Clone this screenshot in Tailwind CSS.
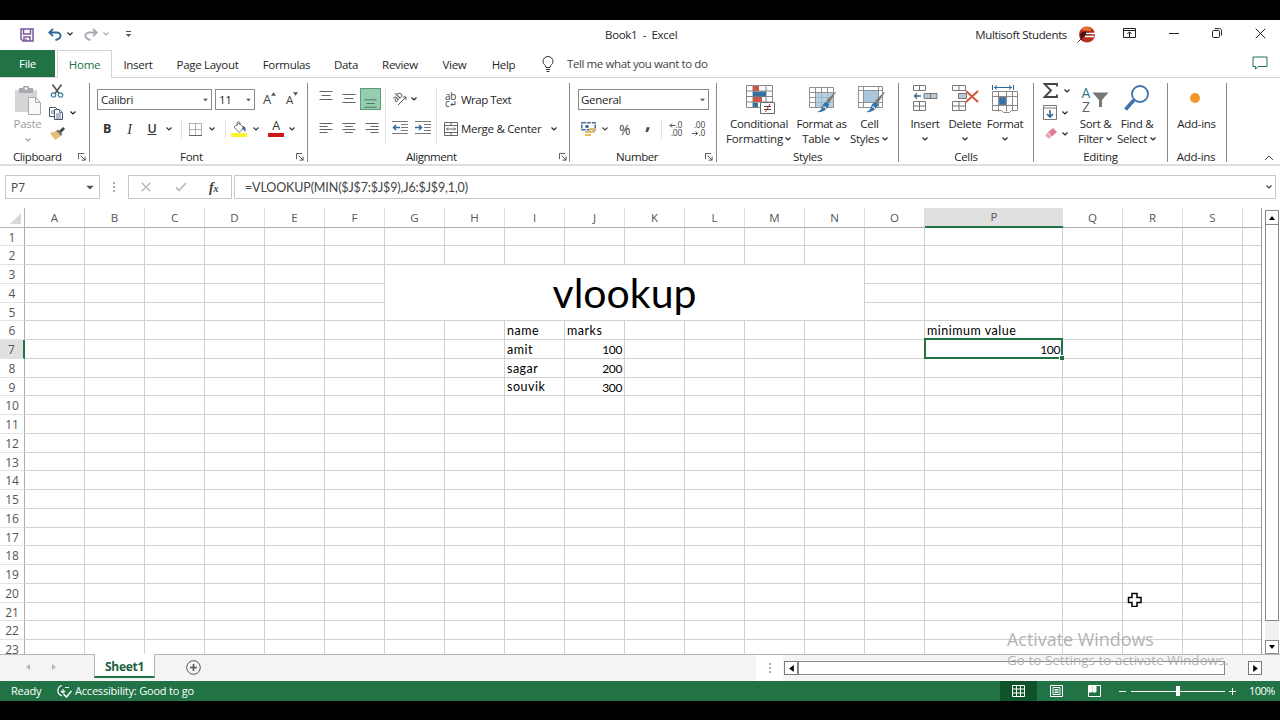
<!DOCTYPE html>
<html lang="en">

<head>
    <meta charset="UTF-8">
    <meta name="viewport" content="width=device-width, initial-scale=1.0">
    <script src="https://cdn.jsdelivr.net/npm/@tailwindcss/browser@4"></script>
    <title>Book1 - Excel</title>
</head>

<body class="bg-black w-[1280px] h-[720px] overflow-hidden pt-5 font-['Open_Sans',sans-serif] text-[11.5px] tracking-[-0.3px] text-[#262626]">

    <!-- shared glyphs -->
    <svg class="hidden">
        <symbol id="caret" viewBox="0 0 8 6"><path d="M1.5 1.5 4 4 6.500 1.500" fill="none" stroke="currentColor" stroke-width="1.200" /></symbol>
        <symbol id="launch" viewBox="0 0 9 9"><path d="M.5 7V.5H7M3 3l5 5M8 4v4H4" fill="none" stroke="#444" /></symbol>
        <symbol id="drop" viewBox="0 0 6 4"><path d="M0 .5h6L3 3.500z" fill="#555" /></symbol>
    </svg>

    <div class="relative bg-white h-[681px] flex flex-col">

        <!-- title bar -->
        <div class="h-[30px] flex items-center shrink-0">
            <div class="flex items-center pl-[20px] w-[605px]">
                <svg class="w-[14px] h-[14px]" viewBox="0 0 14 14" fill="none" stroke="#7a559e" stroke-width="1.500"><path d="M1 1h12v12H3l-2-2zM3.500 1v5h7V1M4 13V9h6v4M6 11v2" /></svg>
                <svg class="w-[14px] h-[13px] ml-[14px] -mt-px" viewBox="0 0 14 13" fill="none" stroke="#2f6798" stroke-width="1.800"><path d="M5 .8 1.200 4.500 5 8.200M1.500 4.500H9c5 .5 5 6-1.500 7.500" /></svg>
                <svg class="w-2 h-1.5 ml-[4px] -mt-[2px]"><use href="#caret" /></svg>
                <svg class="w-[14px] h-[13px] ml-[10px] -mt-px" viewBox="0 0 14 13" fill="none" stroke="#a4a8ae" stroke-width="1.800"><path d="M9 .8 12.800 4.500 9 8.200M12.500 4.500H5c-5 .5-5 6 1.500 7.500" /></svg>
                <svg class="w-2 h-1.5 ml-[4px] -mt-[2px] text-[#aaa]"><use href="#caret" /></svg>
                <svg class="w-[7px] h-[7px] ml-[15px] -mt-[2px]" viewBox="0 0 7 7"><path d="M1 .5h5" stroke="#555" /><path d="M.8 3h5.400L3.500 6z" fill="#555" /></svg>
            </div>
            <span class="whitespace-pre text-[11.500px]">Book1  -  Excel</span>
            <div class="ml-auto flex items-center">
                <span class="text-[11.500px] tracking-[-0.36px]">Multisoft Students</span>
                <svg class="w-[18px] h-[18px] ml-[10px]" viewBox="0 0 18 18"><circle cx="10" cy="8.500" r="8" fill="#b8301f" /><path d="M4 4c3-4 9-4 11 0l-4 1z" fill="#e8742a" /><path d="M3 8c4-4 9-3 12 1H8l-4 5z" fill="#4a1210" /><path d="M9 7.500h9M8 10.500h9" stroke="#fff" stroke-width="1.300" /><path d="m.5 16.500 4-4" stroke="#333" /></svg>
                <svg class="w-[14px] h-[12px] ml-[28px] mb-1" viewBox="0 0 14 12" fill="none" stroke="#222"><path d="M.5 1.500h12v9H.5zM.5 3.500h12M6.500 10V5M4.300 7l2.200-2.200L8.700 7" /></svg>
                <svg class="w-[10px] h-[10px] ml-[32px] mb-1" viewBox="0 0 10 10" stroke="#222"><path d="M0 5.500h10" /></svg>
                <svg class="w-[10px] h-[10px] ml-[33px] mb-1" viewBox="0 0 10 10" fill="none" stroke="#222"><rect x=".5" y="2.500" width="7" height="7" rx="1.200" /><path d="M2.500.6H7.500c1.200 0 2 .8 2 2v5" /></svg>
                <svg class="w-[11px] h-[11px] ml-[33px] mb-1 mr-[14px]" viewBox="0 0 11 11" stroke="#222"><path d="m.7.7 9.600 9.600m0-9.600L.7 10.300" /></svg>
            </div>
        </div>

        <!-- ribbon tabs -->
        <div class="h-[28px] flex shrink-0 border-b border-[#d4d4d4] text-[11.500px]">
            <div class="w-[55px] h-[27px] bg-[#217346] text-white flex items-center justify-center">File</div>
            <div class="w-[55px] ml-[2px] h-[28px] bg-white border border-b-0 border-[#d4d4d4] text-[#217346] flex items-center justify-center">Home</div>
            <div class="w-[52px] pt-[2px] flex items-center justify-center">Insert</div>
            <div class="w-[87px] pt-[2px] flex items-center justify-center">Page Layout</div>
            <div class="w-[71px] pt-[2px] flex items-center justify-center">Formulas</div>
            <div class="w-[48px] pt-[2px] flex items-center justify-center">Data</div>
            <div class="w-[60px] pt-[2px] flex items-center justify-center">Review</div>
            <div class="w-[49px] pt-[2px] flex items-center justify-center">View</div>
            <div class="w-[49px] pt-[2px] flex items-center justify-center">Help</div>
            <div class="flex items-center ml-[14px]">
                <svg class="w-[12px] h-[16px]" viewBox="0 0 12 16" fill="none" stroke="#333"><path d="M4 11.500C4 9 1 8.500 1 5.500a5 5 0 0 1 10 0c0 3-3 3.500-3 6zM4 13.500h4M4.500 15.500h3" /></svg>
                <span class="ml-[13px] text-[#444] tracking-[-0.4px]">Tell me what you want to do</span>
            </div>
            <svg class="w-[16px] h-[14px] ml-auto mr-[12px] mt-[6px]" viewBox="0 0 16 14" fill="none" stroke="#217346"><path d="M1 1h14v9.500H6.500L3.500 13v-2.500H1z" /></svg>
        </div>

        <!-- ribbon -->
        <div class="h-[88px] flex shrink-0 border-b-2 border-[#dedede] pt-[5px]">

            <!-- clipboard -->
            <div class="w-[90px] h-[79px] border-r border-[#8a8a8a] flex flex-col">
                <div class="flex h-[67px] shrink-0">
                    <div class="w-[55px] flex flex-col items-center text-[#a0a0a0] pt-[3px]">
                        <svg class="w-[28px] h-[29px]" viewBox="0 0 28 29"><path d="M1 4h22v22H1z" fill="#d5d5d8" /><path d="M5 2h4a3 3 0 0 1 6 0h4v5H5z" fill="#a9a9ad" /><circle cx="12" cy="2.500" r="1.300" fill="#fff" /><path d="M14.500 11.500h7l5 5v12h-12z" fill="#fafafa" stroke="#aaa" /><path d="M21.500 11.500v5h5" fill="none" stroke="#aaa" /></svg>
                        <span class="leading-[18px]">Paste</span>
                        <svg class="w-2 h-1.5 mt-1"><use href="#caret" /></svg>
                    </div>
                    <div class="flex flex-col pt-[1px]">
                        <svg class="w-[14px] h-[14px] ml-[-5px]" viewBox="0 0 14 14" fill="none"><path d="m2.500.5 6.500 9M11.500.5 5 9.500" stroke="#555" stroke-width="1.600" /><circle cx="3.500" cy="11" r="2.200" stroke="#3a7ca5" stroke-width="1.200" /><circle cx="10.500" cy="11" r="2.200" stroke="#3a7ca5" stroke-width="1.200" /></svg>
                        <div class="flex items-center mt-[8px] ml-[-6px]">
                            <svg class="w-[14px] h-[14px]" viewBox="0 0 14 14" fill="#fff" stroke="#3f5a70"><path d="M.5 1.500h6l2 2v7h-8z" /><path d="M5.500 3.500h5l3 3v7h-8z" /><path d="M7 8h5M7 10h5M7 12h5M2 5h3M2 7h3M10.500 4v2.500H13" stroke-width=".8" /></svg>
                            <svg class="w-2 h-1.5 ml-[6px]"><use href="#caret" /></svg>
                        </div>
                        <svg class="w-[15px] h-[13px] ml-[-5px] mt-[7px]" viewBox="0 0 15 13"><path d="m0 6 6-2 5 5-6 4z" fill="#e4bf74" /><path d="m6 4 2-1.500L12.500 7 11 9z" fill="#777" /><path d="m9 4 4-4 2 2-4 4z" fill="#444" /></svg>
                    </div>
                </div>
                <div class="flex items-center h-[14px] shrink-0 pl-[13px]"><span class="w-[48px] text-[11.500px] tracking-[-0.4px]">Clipboard</span><svg class="w-[8px] h-[8px] ml-[17px]"><use href="#launch" /></svg></div>
            </div>

            <!-- font -->
            <div class="w-[218px] h-[79px] border-r border-[#8a8a8a] flex flex-col">
                <div class="flex items-center shrink-0 pl-[7px] pt-[6px]">
                    <div class="w-[115px] h-[21px] border border-[#8a8a8a] flex items-center justify-between pl-[3px] pr-[3px] text-[11.500px]">Calibri<svg class="w-[5px] h-[4px]"><use href="#drop" /></svg></div>
                    <div class="w-[40px] h-[21px] ml-[3px] border border-[#8a8a8a] flex items-center justify-between pl-[3px] pr-[3px]">11<svg class="w-[5px] h-[4px]"><use href="#drop" /></svg></div>
                    <div class="flex w-[13px] ml-[8px] text-[13px] text-[#444]">A<svg class="w-[5px] h-[4px] mt-[2px] shrink-0" viewBox="0 0 6 4"><path d="M0 4h6L3 0z" fill="#456" /></svg></div>
                    <div class="flex w-[13px] ml-[10px] text-[11.500px] text-[#444]">A<svg class="w-[5px] h-[4px] mt-[1px] shrink-0" viewBox="0 0 6 4"><path d="M0 0h6L3 4z" fill="#456" /></svg></div>
                </div>
                <div class="flex items-center h-[22px] shrink-0 mt-[8px] pl-[7px] text-[12.500px] text-[#333]">
                    <span class="w-[20px] text-center font-bold">B</span>
                    <span class="w-[25px] text-center italic font-['Liberation_Serif',serif] text-[14px]">I</span>
                    <span class="w-[20px] text-center font-semibold underline">U</span>
                    <svg class="w-2 h-1.5 ml-[3px]"><use href="#caret" /></svg>
                    <span class="w-px h-[19px] bg-[#e3e3e3] ml-[8px]"></span>
                    <svg class="w-[13px] h-[13px] ml-[7px]" viewBox="0 0 13 13" fill="none" stroke="#666"><path d="M.5.5h12v12M.5.5v12M6.500.5v12M.5 6.500h12" stroke-dasharray="1 1" /><path d="M0 12.500h13" /></svg>
                    <svg class="w-2 h-1.5 ml-[6px]"><use href="#caret" /></svg>
                    <span class="w-px h-[19px] bg-[#e3e3e3] ml-[9px]"></span>
                    <svg class="w-[16px] h-[16px] ml-[5px]" viewBox="0 0 16 16"><path d="M0 12h16v4H0z" fill="#f8f32b" /><path d="m3 6 5-4 5 5-5 4.500z" fill="#fff" stroke="#777" /><path d="M6 5V1.500q2-2 3 0V4" fill="none" stroke="#777" /><path d="M12 5q4 1 2 6-1-3-3-3z" fill="#3a6a90" /></svg>
                    <svg class="w-2 h-1.5 ml-[5px]"><use href="#caret" /></svg>
                    <span class="w-[16px] h-[16px] ml-[8px] flex items-center justify-center border-b-4 border-[#d01818] leading-none pb-px">A</span>
                    <svg class="w-2 h-1.5 ml-[4px]"><use href="#caret" /></svg>
                </div>
                <div class="flex items-center h-[14px] shrink-0 mt-[10px] pl-[90px] text-[11.500px]"><span class="w-[24px]">Font</span><svg class="w-[8px] h-[8px] ml-[92px]"><use href="#launch" /></svg></div>
            </div>

            <!-- alignment -->
            <div class="w-[262px] h-[79px] border-r border-[#8a8a8a] flex flex-col">
                <div class="flex h-[67px] shrink-0">
                    <div class="w-[77px] pl-[11px] pt-[5px]">
                        <div class="flex items-start">
                            <svg class="w-[14px] h-[10px] mt-[3px]" viewBox="0 0 14 10" stroke="#666"><path d="M.5.5h13M2.500 4.500h9M.5 8.500h13" /></svg>
                            <svg class="w-[14px] h-[10px] mt-[6px] ml-[9px]" viewBox="0 0 14 10" stroke="#666"><path d="M.5.5h13M2.500 4.500h9M.5 8.500h13" /></svg>
                            <div class="w-[21px] h-[22px] ml-[4px] bg-[#97cdaf] border border-[#5d9c79] flex justify-center items-end"><svg class="w-[13px] h-[10px]" viewBox="0 0 14 10" stroke="#4d6f5b"><path d="M.5.5h13M2.500 4.500h9M.5 8.500h13" /></svg></div>
                        </div>
                        <div class="flex mt-[13px] gap-[9px]">
                            <svg class="w-[14px] h-[11px]" viewBox="0 0 14 11" stroke="#666"><path d="M.5.5h13M.5 3.500h8M.5 6.500h13M.5 9.500h8" /></svg>
                            <svg class="w-[14px] h-[11px]" viewBox="0 0 14 11" stroke="#666"><path d="M.5.5h13M3 3.500h8M.5 6.500h13M3 9.500h8" /></svg>
                            <svg class="w-[14px] h-[11px]" viewBox="0 0 14 11" stroke="#666"><path d="M.5.5h13M5.500 3.500h8M.5 6.500h13M5.500 9.500h8" /></svg>
                        </div>
                    </div>
                    <div class="w-[52px] my-[5px] border-x border-[#e3e3e3] pl-[6px]">
                        <div class="flex items-center h-[21px]">
                            <div class="relative w-[16px] h-[16px] text-[9.500px] leading-none text-[#444]"><span class="absolute left-0 top-[1px] -rotate-45">ab</span><svg class="w-[16px] h-[16px]" viewBox="0 0 16 16" fill="none" stroke="#555"><path d="M6 14 14 6M11 6h3v3" /></svg></div>
                            <svg class="w-2 h-1.5 ml-[2px]"><use href="#caret" /></svg>
                        </div>
                        <div class="flex mt-[12px] gap-[7px]">
                            <svg class="w-[16px] h-[13px]" viewBox="0 0 16 13" fill="none" stroke="#777"><path d="M0 .5h16M9 3.500h7M9 6.500h7M9 9.500h7M0 12.500h16" /><path d="M8 6.500H1.500M4 4 1.500 6.500 4 9" stroke="#2f6798" stroke-width="1.500" /></svg>
                            <svg class="w-[16px] h-[13px]" viewBox="0 0 16 13" fill="none" stroke="#777"><path d="M0 .5h16M9 3.500h7M9 6.500h7M9 9.500h7M0 12.500h16" /><path d="M0 6.500h6.500M4 4l2.500 2.500L4 9" stroke="#2f6798" stroke-width="1.500" /></svg>
                        </div>
                    </div>
                    <div class="pl-[7px] pt-[6px]">
                        <div class="flex items-center h-[21px]">
                            <div class="w-[14px] ml-[1px] text-[10px] leading-[7px] text-[#444] flex flex-col"><span>ab</span><span class="flex">c<svg class="w-[6px] h-[6px] mt-px" viewBox="0 0 6 6" fill="none" stroke="#456"><path d="M5 0v3.500H1M2.500 2 1 3.500 2.500 5" /></svg></span></div>
                            <span class="ml-[2px] text-[11.500px] tracking-[-0.5px]">Wrap Text</span>
                        </div>
                        <div class="flex items-center h-[21px] mt-[8px]">
                            <svg class="w-[14px] h-[14px]" viewBox="0 0 14 14" fill="none" stroke="#666"><path d="M.5.5h13v13H.5zM.5 3.500h13M.5 10.500h13M7 .5v3M7 10.500v3M2.500 7h9M4 5.500 2.500 7 4 8.500M10 5.500 11.500 7 10 8.500" /></svg>
                            <span class="ml-[3px] w-[82px] whitespace-nowrap text-[11.500px]">Merge &amp; Center</span>
                            <svg class="w-2 h-1.5 ml-[7px]"><use href="#caret" /></svg>
                        </div>
                    </div>
                </div>
                <div class="flex items-center h-[14px] shrink-0 pl-[98px] text-[11.500px] tracking-[-0.45px]"><span class="w-[52px]">Alignment</span><svg class="w-[8px] h-[8px] ml-[101px]"><use href="#launch" /></svg></div>
            </div>

            <!-- number -->
            <div class="w-[147px] h-[79px] border-r border-[#8a8a8a] flex flex-col">
                <div class="w-[131px] h-[21px] shrink-0 ml-[8px] mt-[6px] border border-[#8a8a8a] flex items-center justify-between pl-[2px] pr-[3px]">General<svg class="w-[5px] h-[4px]"><use href="#drop" /></svg></div>
                <div class="flex items-center h-[22px] shrink-0 mt-[8px] pl-[11px] text-[#444]">
                    <svg class="w-[15px] h-[15px]" viewBox="0 0 15 15" fill="none"><path d="M.8.8h13.400v7H.8z" stroke="#46699a" stroke-width="1.500" stroke-dasharray="4 1" /><circle cx="6" cy="4.500" r="1.800" fill="#46699a" /><path d="M8 6h6v2H8zM8 9h6v2H8zM4 12h6v2H4zM4 9h4v2H4z" fill="#e9bd62" /></svg>
                    <svg class="w-2 h-1.5 ml-[5px]"><use href="#caret" /></svg>
                    <span class="ml-[10px] w-[13px] text-[14px]">%</span>
                    <span class="ml-[13px] w-[6px] text-[20px] leading-none font-bold -mt-[14px]">,</span>
                    <span class="w-px h-[19px] bg-[#e3e3e3] ml-[10px]"></span>
                    <div class="ml-[5px] w-[15px] text-[8.500px] leading-[8px] flex flex-col items-end whitespace-nowrap"><div class="flex items-center"><svg class="w-[7px] h-[5px]" viewBox="0 0 7 5" fill="none" stroke="#555"><path d="M6.500 2.500H.8M3 .5 1 2.500l2 2" /></svg>.0</div><div>.00</div></div>
                    <div class="ml-[8px] w-[15px] text-[8.500px] leading-[8px] flex flex-col items-end whitespace-nowrap"><div>.00</div><div class="flex items-center"><svg class="w-[7px] h-[5px]" viewBox="0 0 7 5" fill="none" stroke="#555"><path d="M0 2.500h5.700M3.500.5l2 2-2 2" /></svg>.0</div></div>
                </div>
                <div class="flex items-center h-[14px] shrink-0 mt-[10px] pl-[46px] text-[11.500px] tracking-[-0.4px]"><span class="w-[40px]">Number</span><svg class="w-[8px] h-[8px] ml-[49px]"><use href="#launch" /></svg></div>
            </div>

            <!-- styles -->
            <div class="w-[182px] h-[79px] border-r border-[#8a8a8a] flex flex-col">
                <div class="flex h-[67px] shrink-0 text-center leading-[15px] pt-[2px]">
                    <div class="w-[84px] flex flex-col items-center">
                        <svg class="w-[30px] h-[29px] ml-[4px]" viewBox="0 0 30 29"><path d="M.5.5h26v22H.5zM.5 6h26M.5 11.500h26M.5 17h26M7 .5v22M20 .5v22" fill="#fff" stroke="#888" /><path d="M7 1h6v5H7z" fill="#cf5545" /><path d="M7 6.500h13v5H7z" fill="#34719f" /><path d="M7 12h9v5H7z" fill="#cf5545" /><path d="M7 17.500h5V22H7z" fill="#34719f" /><path d="M14.500 17.500h14v11h-14z" fill="#fff" stroke="#666" /><path d="M18 21.500h7M18 24.500h7" stroke="#444" /><path d="m24 19-4.500 8" stroke="#c33" /></svg>
                        <div class="mt-[2px]">Conditional</div>
                        <div class="flex items-center whitespace-nowrap tracking-[-0.2px]">Formatting<svg class="w-2 h-1.5 ml-[1px]"><use href="#caret" /></svg></div>
                    </div>
                    <div class="w-[41px] flex flex-col items-center whitespace-nowrap">
                        <svg class="w-[28px] h-[29px] ml-[3px]" viewBox="0 0 28 29"><path d="M.5 2.500h24v20H.5zM.5 7.500h24M.5 12.500h24M.5 17.500h24M6.500 2.500v20M12.500 2.500v20M18.500 2.500v20" fill="#fff" stroke="#909090" /><path d="M7 8h17v14H7z" fill="#9fc0d8" opacity=".75" /><path d="m27 7-7 11-3-2 9-9z" fill="#777" /><path d="M17 17q5 1 2 5-4 6-11 5 4-1 5-5 1-4 4-5z" fill="#3974a8" /><path d="M14 22q3-1 3 2" stroke="#fff" fill="none" /></svg>
                        <div class="mt-[2px] tracking-[-0.4px]">Format as</div>
                        <div class="flex items-center">Table<svg class="w-2 h-1.5 ml-[3px]"><use href="#caret" /></svg></div>
                    </div>
                    <div class="w-[55px] flex flex-col items-center">
                        <svg class="w-[28px] h-[29px] ml-[4px]" viewBox="0 0 28 29"><path d="M.5 1.500h24v21H.5zM.5 5.500h24M.5 17.500h24M5.500 1.500v21M20.500 1.500v21" fill="#fff" stroke="#909090" /><path d="M6 6h14v11H6z" fill="#abc6da" /><path d="m27 7-7 11-3-2 9-9z" fill="#777" /><path d="M17 17q5 1 2 5-4 6-11 5 4-1 5-5 1-4 4-5z" fill="#3974a8" /><path d="M14 22q3-1 3 2" stroke="#fff" fill="none" /></svg>
                        <div class="mt-[2px]">Cell</div>
                        <div class="flex items-center">Styles<svg class="w-2 h-1.5 ml-[2px]"><use href="#caret" /></svg></div>
                    </div>
                </div>
                <div class="h-[14px] shrink-0 text-[11.500px] leading-[14px] text-center">Styles</div>
            </div>

            <!-- cells -->
            <div class="w-[135px] h-[79px] border-r border-[#8a8a8a] flex flex-col">
                <div class="flex h-[67px] shrink-0 pt-[2px] pl-[6px] leading-[15px]">
                    <div class="w-[40px] flex flex-col items-center">
                        <svg class="w-[26px] h-[29px]" viewBox="0 0 26 29" fill="none" stroke="#777"><path d="M1.500.5h12v5h-12zM7.500.5v5M1.500 16.500h12v9h-12zM7.500 16.500v9M1.500 21h12" /><path d="M12 8.500h13v5H12zM18.500 8.500v5" fill="#b9c8d4" /><path d="M9 11H2.500M5 8.500 2.500 11 5 13.500" stroke="#2f6798" stroke-width="1.300" /></svg>
                        <div class="mt-[2px]">Insert</div>
                        <svg class="w-2 h-1.5 mt-[5px]"><use href="#caret" /></svg>
                    </div>
                    <div class="w-[40px] flex flex-col items-center">
                        <svg class="w-[28px] h-[29px]" viewBox="0 0 28 29" fill="none" stroke="#777"><path d="M1.500.5h13v5h-13zM8 .5v5M1.500 16.500h13v9h-13zM8 16.500v9M1.500 21h13" /><path d="M7.500 8.500h8v5h-8z" fill="#b9c8d4" /><path d="m15 6 12 11M27 6 15 17" stroke="#d0583b" stroke-width="2" /></svg>
                        <div class="mt-[2px]">Delete</div>
                        <svg class="w-2 h-1.5 mt-[5px]"><use href="#caret" /></svg>
                    </div>
                    <div class="w-[40px] flex flex-col items-center">
                        <svg class="w-[28px] h-[29px]" viewBox="0 0 28 29" fill="none" stroke="#888"><path d="M1.500 6.500h25v19h-6l-2 2h-6l-2-2h-9zM1.500 11.500h25M1.500 20.500h25M7.500 6.500v20M15.500 6.500v20M21.500 6.500v19" /><path d="M8 12h7v8H8z" fill="#2f74b0" /><path d="M1.500 0v5M22.500 0v5M3 2.500h18M6 .5 3.500 2.500 6 4.500M18 .5l2.500 2L18 4.500" stroke="#2f6798" /></svg>
                        <div class="mt-[2px] tracking-[-0.4px]">Format</div>
                        <svg class="w-2 h-1.5 mt-[5px]"><use href="#caret" /></svg>
                    </div>
                </div>
                <div class="h-[14px] shrink-0 text-[11.500px] leading-[14px] text-center">Cells</div>
            </div>

            <!-- editing -->
            <div class="w-[134px] h-[79px] border-r border-[#8a8a8a] flex flex-col">
                <div class="flex h-[67px] shrink-0 leading-[15px]">
                    <div class="w-[41px] pl-[9px] flex flex-col">
                        <div class="flex items-center"><svg class="w-[15px] h-[15px]" viewBox="0 0 15 15" fill="none" stroke="#444" stroke-width="1.800"><path d="M14 3.500V1H1.500L8 7.500 1.500 14H14v-2.500" /></svg><svg class="w-2 h-1.5 ml-[5px]"><use href="#caret" /></svg></div>
                        <div class="flex items-center mt-[7px]"><svg class="w-[14px] h-[15px]" viewBox="0 0 14 15" fill="none" stroke="#777"><path d="M.5.5h13v14H.5zM.5 3h13" /><path d="M7 5v7M4 9l3 3 3-3" stroke="#2f6798" stroke-width="1.600" /></svg><svg class="w-2 h-1.5 ml-[4px]"><use href="#caret" /></svg></div>
                        <div class="flex items-center mt-[8px] ml-px"><svg class="w-[13px] h-[12px]" viewBox="0 0 13 12"><path d="m4 4 5-4 4 4-5 4.500z" fill="#e07f97" /><path d="m3.500 4.500 4 4L5 11 1 7.500z" fill="#eba9b8" /></svg><svg class="w-2 h-1.5 ml-[4px]"><use href="#caret" /></svg></div>
                    </div>
                    <div class="w-[41px] flex flex-col items-center pt-[2px]">
                        <div class="h-[29px] w-[28px] flex items-center">
                            <div class="leading-[14px] text-[14px] flex flex-col items-center"><span class="text-[#2b7a86]">A</span><span class="text-[#666]">Z</span></div>
                            <svg class="w-[17px] h-[16px] ml-[2px]" viewBox="0 0 17 16"><path d="M.5.5h16L10 8v7H7V8z" fill="#777" /></svg>
                        </div>
                        <div class="mt-[2px] whitespace-nowrap">Sort &amp;</div>
                        <div class="flex items-center">Filter<svg class="w-2 h-1.5 ml-[2px]"><use href="#caret" /></svg></div>
                    </div>
                    <div class="w-[42px] flex flex-col items-center pt-[2px]">
                        <svg class="w-[28px] h-[29px]" viewBox="0 0 28 29" fill="none" stroke="#3f75ad"><circle cx="17" cy="9" r="8" stroke-width="1.800" /><path d="m11 15-8.500 9.500" stroke-width="3.500" /></svg>
                        <div class="mt-[2px] whitespace-nowrap">Find &amp;</div>
                        <div class="flex items-center">Select<svg class="w-2 h-1.5 ml-[2px]"><use href="#caret" /></svg></div>
                    </div>
                </div>
                <div class="h-[14px] shrink-0 text-[11.500px] leading-[14px] text-center">Editing</div>
            </div>

            <!-- add-ins -->
            <div class="w-[59px] h-[79px] border-r border-[#8a8a8a] flex flex-col items-center">
                <div class="h-[67px] shrink-0 flex flex-col items-center leading-[15px]">
                    <div class="w-[10px] h-[10px] rounded-full bg-[#f0962c] mt-[10px] mr-[3px]"></div>
                    <div class="mt-[13px] mr-px">Add-ins</div>
                </div>
                <div class="h-[14px] shrink-0 text-[11.500px] leading-[14px] mr-[2px]">Add-ins</div>
            </div>
            <svg class="w-[10px] h-[6px] ml-auto mr-[6px] mt-[72px]" viewBox="0 0 10 6" fill="none" stroke="#444"><path d="m1 5 4-4 4 4" /></svg>
        </div>

        <!-- formula bar -->
        <div class="h-[42px] flex items-start shrink-0 pt-[9px] pl-[5px] text-[#444]">
            <div class="w-[95px] h-[24px] border border-[#c8c8c8] flex items-center justify-between pl-[5px] pr-[5px] pt-px text-[12px] tracking-normal">P7<svg class="w-[8px] h-[5px]"><use href="#drop" /></svg></div>
            <div class="w-[28px] h-[24px] flex flex-col items-center justify-center gap-[2px]">
                <span class="w-[2px] h-[2px] bg-[#aaa]"></span><span class="w-[2px] h-[2px] bg-[#aaa]"></span><span class="w-[2px] h-[2px] bg-[#aaa]"></span>
            </div>
            <div class="w-[104px] h-[24px] border border-[#c8c8c8] flex items-center pl-[12px]">
                <svg class="w-[10px] h-[10px]" viewBox="0 0 10 10" stroke="#bbb" stroke-width="1.500"><path d="m.7.7 8.600 8.600m0-8.600L.7 9.300" /></svg>
                <svg class="w-[12px] h-[10px] ml-[24px]" viewBox="0 0 12 10" fill="none" stroke="#bbb" stroke-width="1.800"><path d="m1 5.500 3 3L11 1" /></svg>
                <span class="ml-[22px] italic font-['Liberation_Serif',serif] font-bold text-[14px]">f<span class="text-[10px]">x</span></span>
            </div>
            <div class="w-[1042px] h-[24px] ml-[2px] border border-[#c8c8c8] flex items-center justify-between pl-[10px] pr-[2px] pt-[2px] font-['Lato',sans-serif] text-[12.500px] tracking-[-0.13px]">
                <span>=VLOOKUP(MIN($J$7:$J$9),J6:$J$9,1,0)</span>
                <svg class="w-2 h-1.5 mb-[2px]"><use href="#caret" /></svg>
            </div>
        </div>

        <!-- sheet -->
        <div class="flex h-[446px] shrink-0 tracking-normal">
            <div id="sheet" class="relative w-[1262px] h-[446px] overflow-hidden border-r border-[#999] grid grid-cols-[25px_repeat(15,60px)_138px_60px_60px_60px_19px] grid-rows-[19.5px_repeat(23,18.75px)]"></div>
            <div class="w-[18px] pl-[3px] pr-px pt-[2px] flex flex-col">
                <div class="h-[15px] border border-[#8a8a8a] flex items-center justify-center"><svg class="w-[6px] h-[4px]" viewBox="0 0 6 4"><path d="M0 4h6L3 0z" /></svg></div>
                <div class="h-[396px] border border-t-0 border-[#8a8a8a]"></div>
                <div class="grow bg-[#f0f0f0]"></div>
                <div class="h-[14px] border border-[#8a8a8a] flex items-center justify-center"><svg class="w-[6px] h-[4px]" viewBox="0 0 6 4"><path d="M0 0h6L3 4z" /></svg></div>
            </div>
        </div>

        <!-- sheet tabs -->
        <div class="h-[27px] shrink-0 bg-[#f4f4f4] border-t border-[#b5b5b5] flex">
            <svg class="w-[4px] h-[6px] ml-[26px] mt-[9px]" viewBox="0 0 4 6"><path d="M4 0v6L0 3z" fill="#b5b5b5" /></svg>
            <svg class="w-[4px] h-[6px] ml-[22px] mt-[9px]" viewBox="0 0 4 6"><path d="M0 0v6l4-3z" fill="#b5b5b5" /></svg>
            <div class="w-[61px] h-[24px] -mt-px pt-[3px] ml-[38px] bg-white border-x border-x-[#b5b5b5] border-b-2 border-b-[#217346] flex items-center justify-center font-bold text-[12px] text-[#1c5f3a]">Sheet1</div>
            <svg class="w-[15px] h-[15px] ml-[31px] mt-[5px]" viewBox="0 0 15 15" fill="none" stroke="#555"><circle cx="7.500" cy="7.500" r="6.800" /><path d="M4 7.500h7M7.500 4v7" stroke-width="1.600" /></svg>
            <div class="w-[27px] ml-[555px] bg-white flex flex-col items-end justify-center gap-[2px] pr-[12px]">
                <span class="w-[2px] h-[2px] bg-[#aaa]"></span><span class="w-[2px] h-[2px] bg-[#aaa]"></span><span class="w-[2px] h-[2px] bg-[#aaa]"></span>
            </div>
            <div class="mt-[6px] h-[14px] ml-[1px] flex">
                <div class="w-[14px] bg-white border border-[#777] flex items-center justify-center"><svg class="w-[5px] h-[7px]" viewBox="0 0 4 6"><path d="M4 0v6L0 3z" /></svg></div>
                <div class="w-[427px] bg-white border border-[#8a8a8a]"></div>
                <div class="w-[23px]"></div>
                <div class="w-[14px] bg-white border border-[#777] flex items-center justify-center"><svg class="w-[5px] h-[7px]" viewBox="0 0 4 6"><path d="M0 0v6l4-3z" /></svg></div>
            </div>
        </div>

        <!-- status bar -->
        <div class="h-[20px] shrink-0 bg-[#217346] text-white flex items-center text-[11px]">
            <span class="ml-[11px] w-[30px] tracking-[-0.2px]">Ready</span>
            <svg class="w-[15px] h-[14px] ml-[16px]" viewBox="0 0 15 14" fill="none" stroke="#fff"><path d="M5 1.500C-.5 3-.5 10 5 12M8 3.500h4M6 5v4M4 7l2 2 2-2" stroke-width="1.200" /><path d="m6.500 10 3 3 5-6" stroke-width="1.500" /></svg>
            <span class="ml-[3px] tracking-[-0.2px]">Accessibility: Good to go</span>
            <div class="w-[37px] h-[20px] ml-auto bg-[#0e5229] flex items-center justify-center"><svg class="w-[13px] h-[12px]" viewBox="0 0 13 12" fill="none" stroke="#fff"><path d="M.5.5h12v11H.5zM.5 4h12M.5 8h12M4.500.5v11M8.500.5v11" /></svg></div>
            <svg class="w-[13px] h-[12px] ml-[13px]" viewBox="0 0 13 12" fill="none" stroke="#fff"><path d="M.5.5h12v11H.5zM3 2.500h7v7H3zM4.500 4.500h4M4.500 6h4M4.500 7.500h4" /></svg>
            <svg class="w-[13px] h-[12px] ml-[25px]" viewBox="0 0 13 12" fill="none" stroke="#fff"><path d="M.5.5h12v11H.5z" /><path d="M1 1h3v6H1zM5 1h3v6H5z" fill="#fff" /></svg>
            <svg class="w-[7px] h-[7px] ml-[18px]" viewBox="0 0 7 7" stroke="#fff"><path d="M0 3.500h7" /></svg>
            <div class="w-[94px] ml-[5px] flex items-center"><span class="w-[45px] h-px bg-white"></span><span class="w-[4px] h-[10px] bg-white"></span><span class="grow h-px bg-white"></span></div>
            <svg class="w-[7px] h-[7px] ml-[4px]" viewBox="0 0 7 7" stroke="#fff"><path d="M0 3.500h7M3.500 0v7" /></svg>
            <span class="ml-[13px] w-[31px] tracking-[-0.5px]">100%</span>
        </div>

        <!-- windows watermark -->
        <div class="absolute left-[1007px] top-[608px] text-[#a9a9a9]/90 whitespace-nowrap tracking-normal">
            <div class="text-[17.900px] leading-[22px]">Activate Windows</div>
            <div class="text-[13.500px] leading-[21px]">Go to Settings to activate Windows.</div>
        </div>

        <!-- cell cursor -->
        <svg class="absolute left-[1127px] top-[572px] w-[15px] h-[15px]" viewBox="0 0 15 15"><path d="M5 1.500h5v4h4v5h-4v4H5v-4H1.500v-5H5z" fill="#fff" stroke="#000" stroke-width="1.500" /></svg>
    </div>

    <script>
        const columns = ["A", "B", "C", "D", "E", "F", "G", "H", "I", "J", "K", "L", "M", "N", "O", "P", "Q", "R", "S", ""];
        const values = {
            I6: "name", J6: "marks", P6: "minimum value",
            I7: "amit", J7: 100, P7: 100,
            I8: "sagar", J8: 200,
            I9: "souvik", J9: 300
        };

        const sheet = document.getElementById("sheet");
        let html = `<div class="border-r border-b border-[#b5b5b5] flex items-end justify-end p-[3px]"><svg class="w-[11px] h-[11px]" viewBox="0 0 11 11"><path d="M11 0v11H0z" fill="#d8d8d8" /></svg></div>`;

        for (const col of columns) {
            const look = col === "P"
                ? "bg-[#e0e0e0] border-b-2 border-b-[#217346]"
                : "border-b border-b-[#adadad] border-r border-r-[#dcdcdc]";
            html += `<div class="${look} flex items-center justify-center text-[11.500px] text-[#555]">${col}</div>`;
        }

        for (let row = 1; row <= 23; row++) {
            const look = row === 7 ? "bg-[#e0e0e0] border-r-2 border-r-[#217346]" : "border-r border-r-[#adadad]";
            html += `<div class="${look} border-b border-b-[#e3e3e3] pt-[2.500px] leading-none flex items-center justify-center text-[12px] text-[#555]">${row}</div>`;

            for (const col of columns) {
                const merged = row >= 3 && row <= 5 && col >= "G" && col <= "N";
                if (merged) {
                    if (row === 3 && col === "G") {
                        html += `<div class="col-start-8 col-span-8 row-start-4 row-span-3 border-r border-b border-[#d0d0d0] flex items-center justify-center font-['Lato',sans-serif] text-[41px] leading-none text-black">vlookup</div>`;
                    }
                    continue;
                }
                const value = values[col + row];
                const align = typeof value === "number" ? "justify-end text-[12px] tracking-[-0.4px]" : "justify-start text-[12.500px] tracking-[0.5px]";
                html += `<div class="border-r border-b border-[#d0d0d0] flex items-center ${align} pt-[2.500px] px-[2px] font-['Lato',sans-serif] text-black whitespace-nowrap leading-none">${value ?? ""}</div>`;
            }
        }

        // selection frame around P7
        html += `<div class="absolute left-[924px] top-[130px] w-[139px] h-[21px] border-2 border-[#217346]"></div>
                 <div class="absolute left-[1059px] top-[147px] w-[5px] h-[5px] bg-[#217346] border-l border-t border-white"></div>`;

        sheet.innerHTML = html;
    </script>
</body>

</html>
